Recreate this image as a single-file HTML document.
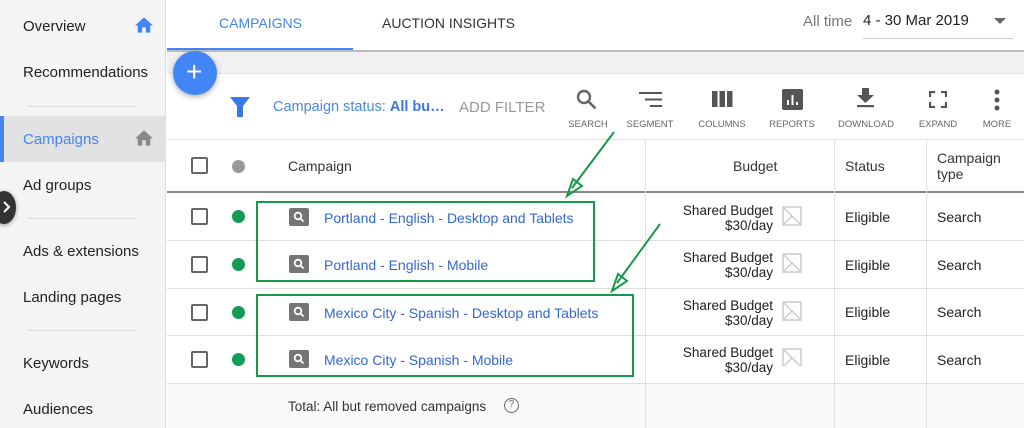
<!DOCTYPE html>
<html><head><meta charset="utf-8"><style>
*{margin:0;padding:0;box-sizing:border-box}
body{width:1024px;height:428px;overflow:hidden;position:relative;background:#fff;font-family:"Liberation Sans",Arial,sans-serif;color:#333}
.a{position:absolute;white-space:nowrap}
.side{position:absolute;left:0;top:0;width:166px;height:428px;background:#f4f4f4;border-right:1px solid #ddd}
.si{position:absolute;left:23px;font-size:15px;color:#212121}
.div{position:absolute;left:27px;width:111px;height:1px;background:#ddd}
.hl{position:absolute;left:167px;right:0;height:1px;background:#e0e0e0}
.vl{position:absolute;width:1px;background:#e0e0e0}
.cb{position:absolute;left:191px;width:17px;height:17px;border:2px solid #666;border-radius:2px}
.dot{position:absolute;left:232px;width:13px;height:13px;border-radius:50%;background:#0f9d58}
.si2{position:absolute;left:289px;width:20px;height:18px;background:#757575;border-radius:2px}
.link{position:absolute;left:324px;font-size:14px;color:#3367d6}
.bud{position:absolute;left:660px;width:113px;text-align:right;font-size:13.5px;line-height:15px;color:#212121}
.cell{position:absolute;font-size:14px;color:#212121}
.tl{position:absolute;font-size:9.5px;color:#666;text-align:center;width:70px}
</style></head><body>
<div class="side">
<div class="si" style="top:18px">Overview</div>
<svg class="a" style="left:135px;top:17px" width="18" height="16" viewBox="0 0 20 17"><path d="M8 17v-6h4v6h5V9h3L10 0 0 9h3v8z" fill="#4285f4"/></svg>
<div class="si" style="top:64px">Recommendations</div>
<div class="div" style="top:106px"></div>
<div class="a" style="left:0;top:116px;width:166px;height:46px;background:#e2e2e2"></div>
<div class="a" style="left:0;top:116px;width:4px;height:46px;background:#4285f4"></div>
<div class="si" style="top:131px;color:#4285f4">Campaigns</div>
<svg class="a" style="left:135px;top:130px" width="18" height="16" viewBox="0 0 20 17"><path d="M8 17v-6h4v6h5V9h3L10 0 0 9h3v8z" fill="#888"/></svg>
<div class="si" style="top:177px">Ad groups</div>
<div class="div" style="top:218px"></div>
<div class="si" style="top:243px">Ads &amp; extensions</div>
<div class="si" style="top:289px">Landing pages</div>
<div class="div" style="top:330px"></div>
<div class="si" style="top:355px">Keywords</div>
<div class="si" style="top:401px">Audiences</div>
</div>
<div class="a" style="left:-8px;top:191px;width:24px;height:33px;border-radius:50%;background:#333;box-shadow:0 1px 4px rgba(0,0,0,.4)"></div>
<svg class="a" style="left:3px;top:201px" width="8" height="12" viewBox="0 0 8 12"><path d="M1 1l5 5-5 5" stroke="#fff" stroke-width="2" fill="none"/></svg>

<div class="a" style="left:219px;top:15px;font-size:14px;color:#4285f4">CAMPAIGNS</div>
<div class="a" style="left:167px;top:48px;width:186px;height:3px;background:#4285f4"></div>
<div class="a" style="left:382px;top:15px;font-size:14px;color:#333">AUCTION INSIGHTS</div>
<div class="a" style="left:803px;top:13px;font-size:15px;color:#777">All time</div>
<div class="a" style="left:863px;top:12px;font-size:15px;color:#212121">4 - 30 Mar 2019</div>
<div class="a" style="left:863px;top:38px;width:150px;height:1px;background:#ccc"></div>
<svg class="a" style="left:994px;top:18px" width="12" height="6"><path d="M0 0h12L6 6z" fill="#666"/></svg>
<div class="a" style="left:167px;top:50px;right:0;height:2px;background:#bbb"></div>
<div class="a" style="left:167px;top:52px;right:0;height:22px;background:#f1f1f1;border-bottom:1px solid #e4e4e4"></div>
<div class="a" style="left:173px;top:51px;width:44px;height:44px;border-radius:50%;background:#4285f4;box-shadow:0 2px 6px rgba(0,0,0,.3)"></div>
<div class="a" style="left:186px;top:53px;font-size:28px;color:#fff;line-height:38px">+</div>

<svg class="a" style="left:230px;top:97px" width="20" height="20" viewBox="0 0 20 20"><path d="M0 0h20l-7 9v11h-6V9z" fill="#3b78e7"/></svg>
<div class="a" style="left:273px;top:99px;font-size:14.5px;color:#4a86e8">Campaign status: <b style="color:#3b78e7">All bu…</b></div>
<div class="a" style="left:459px;top:99px;font-size:15px;color:#999">ADD FILTER</div>
<svg class="a" style="left:576px;top:89px" width="22" height="22" viewBox="0 0 22 22"><circle cx="8" cy="8" r="6" stroke="#666" stroke-width="2.4" fill="none"/><path d="M12.5 12.5l7 7" stroke="#666" stroke-width="2.6"/></svg>
<div class="tl" style="left:553px;top:119px">SEARCH</div>
<svg class="a" style="left:639px;top:92px" width="23" height="16"><path d="M0 1h23M6 7.5h17M11 14h12" stroke="#555" stroke-width="2"/></svg>
<div class="tl" style="left:615px;top:119px">SEGMENT</div>
<svg class="a" style="left:712px;top:91px" width="21" height="16"><rect x="0" y="0" width="5.5" height="16" fill="#555"/><rect x="7.5" y="0" width="5.5" height="16" fill="#555"/><rect x="15" y="0" width="5.5" height="16" fill="#555"/></svg>
<div class="tl" style="left:687px;top:119px">COLUMNS</div>
<svg class="a" style="left:782px;top:89px" width="21" height="21"><rect width="21" height="21" rx="2" fill="#555"/><path d="M6 16v-5M10.5 16V6M15 16v-3" stroke="#fff" stroke-width="2"/></svg>
<div class="tl" style="left:757px;top:119px">REPORTS</div>
<svg class="a" style="left:856px;top:88px" width="19" height="20"><path d="M6 0h7v7h5l-8.5 8L1 7h5z" fill="#555"/><rect x="1" y="17" width="17" height="2.2" fill="#555"/></svg>
<div class="tl" style="left:831px;top:119px">DOWNLOAD</div>
<svg class="a" style="left:929px;top:91px" width="18" height="17"><path d="M1 6V1h5M12 1h5v5M17 11v5h-5M6 16H1v-5" stroke="#555" stroke-width="2.2" fill="none"/></svg>
<div class="tl" style="left:903px;top:119px">EXPAND</div>
<svg class="a" style="left:994px;top:89px" width="6" height="22"><circle cx="3" cy="3" r="2.5" fill="#555"/><circle cx="3" cy="11" r="2.5" fill="#555"/><circle cx="3" cy="19" r="2.5" fill="#555"/></svg>
<div class="tl" style="left:962px;top:119px">MORE</div>

<div class="hl" style="top:139px"></div>
<div class="cb" style="top:157px"></div>
<div class="a" style="left:232px;top:160px;width:13px;height:13px;border-radius:50%;background:#999"></div>
<div class="cell" style="left:288px;top:158px;color:#333">Campaign</div>
<div class="cell" style="left:733px;top:158px;color:#333">Budget</div>
<div class="cell" style="left:845px;top:158px;color:#333">Status</div>
<div class="cell" style="left:937px;top:150px;color:#333;line-height:16px">Campaign<br>type</div>
<div class="a" style="left:167px;top:191px;right:0;height:2px;background:#888"></div>
<div class="hl" style="top:240px"></div>
<div class="hl" style="top:288px"></div>
<div class="hl" style="top:335px"></div>
<div class="hl" style="top:383px"></div>
<div class="a" style="left:167px;top:384px;right:0;bottom:0;background:#f8f9fa"></div>
<div class="vl" style="left:645px;top:140px;height:288px"></div>
<div class="vl" style="left:834px;top:140px;height:288px"></div>
<div class="vl" style="left:926px;top:140px;height:288px"></div>

<div class="cb" style="top:208px"></div><div class="dot" style="top:210px"></div>
<div class="cb" style="top:256px"></div><div class="dot" style="top:258px"></div>
<div class="cb" style="top:304px"></div><div class="dot" style="top:306px"></div>
<div class="cb" style="top:351px"></div><div class="dot" style="top:353px"></div>

<div class="si2" style="top:208px"></div><div class="si2" style="top:255px"></div><div class="si2" style="top:303px"></div><div class="si2" style="top:350px"></div>
<svg class="a" style="left:289px;top:208px" width="20" height="160" viewBox="0 0 20 160"><g stroke="#fff" stroke-width="1.8" fill="none"><circle cx="9" cy="8" r="3.3"/><path d="M11.5 10.5l3 3"/><circle cx="9" cy="55" r="3.3"/><path d="M11.5 57.5l3 3"/><circle cx="9" cy="103" r="3.3"/><path d="M11.5 105.5l3 3"/><circle cx="9" cy="150" r="3.3"/><path d="M11.5 152.5l3 3"/></g></svg>

<div class="link" style="top:210px">Portland - English - Desktop and Tablets</div>
<div class="link" style="top:257px">Portland - English - Mobile</div>
<div class="link" style="top:305px">Mexico City - Spanish - Desktop and Tablets</div>
<div class="link" style="top:352px">Mexico City - Spanish - Mobile</div>

<div class="bud" style="top:203px">Shared Budget<br>$30/day</div>
<div class="bud" style="top:250px">Shared Budget<br>$30/day</div>
<div class="bud" style="top:298px">Shared Budget<br>$30/day</div>
<div class="bud" style="top:345px">Shared Budget<br>$30/day</div>
<svg class="a" style="left:782px;top:206px" width="20" height="160" viewBox="0 0 20 160"><g stroke="#ccc" stroke-width="1.5" fill="none"><path d="M1 1h18v18H1zM1 1l18 18M1 19l9-9"/><path d="M1 48h18v18H1zM1 48l18 18M1 66l9-9"/><path d="M1 96h18v18H1zM1 96l18 18M1 114l9-9"/><path d="M1 143h18v18H1zM1 143l18 18M1 161l9-9"/></g></svg>

<div class="cell" style="left:845px;top:209px">Eligible</div><div class="cell" style="left:937px;top:209px">Search</div>
<div class="cell" style="left:845px;top:257px">Eligible</div><div class="cell" style="left:937px;top:257px">Search</div>
<div class="cell" style="left:845px;top:304px">Eligible</div><div class="cell" style="left:937px;top:304px">Search</div>
<div class="cell" style="left:845px;top:352px">Eligible</div><div class="cell" style="left:937px;top:352px">Search</div>

<div class="cell" style="left:288px;top:399px;font-size:13.5px;color:#333">Total: All but removed campaigns</div>
<div class="a" style="left:504px;top:398px;width:15px;height:15px;border:1.5px solid #666;border-radius:50%;font-size:10px;text-align:center;line-height:12px;color:#666">?</div>

<div class="a" style="left:256px;top:201px;width:339px;height:81px;border:2px solid #159a4a"></div>
<div class="a" style="left:256px;top:294px;width:378px;height:83px;border:2px solid #159a4a"></div>
<svg class="a" style="left:0;top:0" width="1024" height="428"><g stroke="#159a4a" stroke-width="2" fill="none"><path d="M614 132L572 188"/><path d="M567 196l6-17 9 7z"/><path d="M660 224L617 283"/><path d="M612 291l6-17 9 7z"/></g></svg>
</body></html>
